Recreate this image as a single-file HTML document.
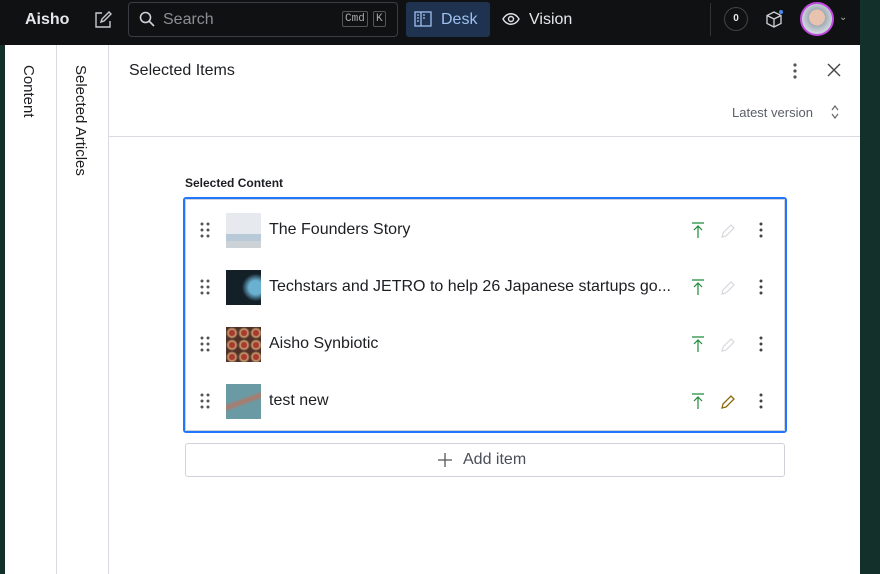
<!DOCTYPE html>
<html><head><meta charset="utf-8"><style>
*{box-sizing:border-box;margin:0;padding:0}
body{width:880px;height:574px;overflow:hidden;background:#13302a;font-family:"Liberation Sans",sans-serif;position:relative}
.a{position:absolute}
.top{left:0;top:0;width:860px;height:45px;background:#101112;color:#e6e7ea}
.pane{left:5px;top:45px;width:855px;height:529px;background:#fff}
.vl{position:absolute;top:0;bottom:0;width:1px;background:#d8dbe0}
.vt{position:absolute;writing-mode:vertical-rl;font-size:15px;color:#1c1e22;top:20px}
.row{position:absolute;left:0;width:600px;height:57px}
.thumb{position:absolute;left:41px;top:12px;width:35px;height:35px}
.rt{position:absolute;left:84px;top:20px;font-size:16px;color:#1c1e22;white-space:nowrap}
.grip{position:absolute;left:15px;top:21px}
</style></head><body>
<div class="a top">
 <div class="a" style="left:25px;top:11px;font-size:16px;font-weight:bold">Aisho</div>
 <svg class="a" style="left:93px;top:10px" width="20" height="20" viewBox="0 0 20 20" fill="none" stroke="#c8cad0" stroke-width="1.4"><path d="M9 3H3v14h14v-6"/><path d="M8 12l1-3 7-7 2 2-7 7z"/></svg>
 <div class="a" style="left:128px;top:2px;width:270px;height:35px;border:1px solid #3a3d44;border-radius:4px"></div>
 <svg class="a" style="left:138px;top:10px" width="18" height="18" viewBox="0 0 18 18" fill="none" stroke="#d0d2d8" stroke-width="1.6"><circle cx="7.5" cy="7.5" r="5"/><path d="M11 11l5 5"/></svg>
 <div class="a" style="left:163px;top:11px;font-size:16px;color:#8a8e96">Search</div>
 <div class="a" style="left:342px;top:11px;font-family:'Liberation Mono',monospace;font-size:11px;color:#aaa;border:1px solid #555;border-radius:2px;padding:1px 2px">Cmd</div>
 <div class="a" style="left:373px;top:11px;font-family:'Liberation Mono',monospace;font-size:11px;color:#aaa;border:1px solid #555;border-radius:2px;padding:1px 2px">K</div>
 <div class="a" style="left:406px;top:2px;width:84px;height:35px;background:#1f3350;border-radius:3px"></div>
 <svg class="a" style="left:414px;top:11px" width="18" height="16" viewBox="0 0 18 16" fill="none" stroke="#9ec0f0" stroke-width="1.3"><rect x="1" y="1" width="16" height="14"/><path d="M7 1v14M3 4h2M3 7h2M3 10h2M9 4h2M9 7h2"/></svg>
 <div class="a" style="left:441px;top:11px;font-size:16px;color:#9ec0f0">Desk</div>
 <svg class="a" style="left:502px;top:12px" width="18" height="14" viewBox="0 0 18 14" fill="none" stroke="#e0e2e6" stroke-width="1.4"><path d="M1 7c4-7 12-7 16 0-4 7-12 7-16 0z"/><circle cx="9" cy="7" r="2.5"/></svg>
 <div class="a" style="left:529px;top:11px;font-size:16px">Vision</div>
 <div class="a" style="left:710px;top:3px;width:1px;height:33px;background:#333"></div>
 <div class="a" style="left:724px;top:7px;width:24px;height:24px;border:1.5px solid #444;border-radius:50%;font-size:10px;font-weight:bold;text-align:center;line-height:21px">0</div>
 <svg class="a" style="left:764px;top:9px" width="20" height="20" viewBox="0 0 20 20" fill="none" stroke="#d0d2d8" stroke-width="1.3"><path d="M10 3l7 3.5v8L10 18l-7-3.5v-8z"/><path d="M3 6.5L10 10l7-3.5M10 10v8"/><circle cx="17" cy="3" r="2" fill="#4a8cf0" stroke="none"/></svg>
 <div class="a" style="left:800px;top:2px;width:34px;height:34px;border-radius:50%;border:2px solid #c248e0;background:radial-gradient(circle at 50% 45%,#e8c4b0 0 35%,#a0aab4 36%,#cfd8de 70%)"></div>
 <div class="a" style="left:839px;top:12px;font-size:10px;color:#aaa">⌄</div>
</div>
<div class="a pane">
 <div class="vl" style="left:51px"></div>
 <div class="vl" style="left:103px"></div>
 <div class="vt" style="left:15px">Content</div>
 <div class="vt" style="left:67px">Selected Articles</div>
 <div class="a" style="left:124px;top:17px;font-size:16px;color:#1c1e22">Selected Items</div>
 <svg class="a" style="left:787px;top:17px" width="6" height="18"><circle cx="3" cy="3" r="1.6" fill="#555"/><circle cx="3" cy="9" r="1.6" fill="#555"/><circle cx="3" cy="15" r="1.6" fill="#555"/></svg>
 <svg class="a" style="left:822px;top:18px" width="14" height="14" stroke="#444" stroke-width="1.4"><path d="M1 1l12 12M13 1L1 13"/></svg>
 <div class="a" style="left:727px;top:60px;font-size:13px;color:#5a5e68">Latest version</div>
 <svg class="a" style="left:825px;top:59px" width="10" height="16" fill="none" stroke="#666" stroke-width="1.2"><path d="M2 6l3-4 3 4M2 10l3 4 3-4"/></svg>
 <div class="a" style="left:104px;top:91px;width:751px;height:1px;background:#d8dbe0"></div>
 <div class="a" style="left:180px;top:131px;font-size:12px;font-weight:bold;color:#1c1e22">Selected Content</div>
</div>
<div class="a" style="left:183px;top:197px;width:604px;height:236px;border:2px solid #2276fc;border-radius:3px">
 <div class="a" style="inset:0;border:1px solid #cfd3d9"></div>
</div>
<div class="a" style="left:185px;top:199px;width:600px;height:232px">
 <div class="row" style="top:2px"><svg class="grip" width="10" height="16"><g fill="#555"><circle cx="2" cy="2" r="1.5"/><circle cx="8" cy="2" r="1.5"/><circle cx="2" cy="8" r="1.5"/><circle cx="8" cy="8" r="1.5"/><circle cx="2" cy="14" r="1.5"/><circle cx="8" cy="14" r="1.5"/></g></svg>
 <div class="thumb" style="background:linear-gradient(#e6eaee 0 60%,#b8cad8 60% 80%,#ccd2d6 80%)"></div><div class="rt">The Founders Story</div></div>
 <div class="row" style="top:59px"><svg class="grip" width="10" height="16"><g fill="#555"><circle cx="2" cy="2" r="1.5"/><circle cx="8" cy="2" r="1.5"/><circle cx="2" cy="8" r="1.5"/><circle cx="8" cy="8" r="1.5"/><circle cx="2" cy="14" r="1.5"/><circle cx="8" cy="14" r="1.5"/></g></svg>
 <div class="thumb" style="background:radial-gradient(circle at 85% 50%,#6ab0d0 0 20%,#142028 40%)"></div><div class="rt">Techstars and JETRO to help 26 Japanese startups go...</div></div>
 <div class="row" style="top:116px"><svg class="grip" width="10" height="16"><g fill="#555"><circle cx="2" cy="2" r="1.5"/><circle cx="8" cy="2" r="1.5"/><circle cx="2" cy="8" r="1.5"/><circle cx="8" cy="8" r="1.5"/><circle cx="2" cy="14" r="1.5"/><circle cx="8" cy="14" r="1.5"/></g></svg>
 <div class="thumb" style="background:radial-gradient(circle,#a83a30 0 30%,#c8a070 45%,#503028 70%);background-size:12px 12px"></div><div class="rt">Aisho Synbiotic</div></div>
 <div class="row" style="top:173px"><svg class="grip" width="10" height="16"><g fill="#555"><circle cx="2" cy="2" r="1.5"/><circle cx="8" cy="2" r="1.5"/><circle cx="2" cy="8" r="1.5"/><circle cx="8" cy="8" r="1.5"/><circle cx="2" cy="14" r="1.5"/><circle cx="8" cy="14" r="1.5"/></g></svg>
 <div class="thumb" style="background:linear-gradient(160deg,#6a9aa4 0 40%,#b07868 50%,#6a9aa4 60%)"></div><div class="rt">test new</div></div>
</div>
<svg class="a" style="left:691px;top:221px" width="460" height="200" fill="none">
 <g stroke="#1f8a3a" stroke-width="1.2"><path d="M1 2h12M7 5v12M3 9l4-4 4 4"/><path d="M1 59h12M7 62v12M3 66l4-4 4 4"/><path d="M1 116h12M7 119v12M3 123l4-4 4 4"/><path d="M1 173h12M7 176v12M3 180l4-4 4 4"/></g>
 <g stroke="#d6d8dc" stroke-width="1.2"><path d="M31 16l1-4 8-8 3 3-8 8z"/><path d="M31 73l1-4 8-8 3 3-8 8z"/><path d="M31 130l1-4 8-8 3 3-8 8z"/></g>
 <path d="M31 187l1-4 8-8 3 3-8 8z" stroke="#8a6a10" stroke-width="1.3"/>
 <g fill="#444"><circle cx="70" cy="3" r="1.5"/><circle cx="70" cy="9" r="1.5"/><circle cx="70" cy="15" r="1.5"/><circle cx="70" cy="60" r="1.5"/><circle cx="70" cy="66" r="1.5"/><circle cx="70" cy="72" r="1.5"/><circle cx="70" cy="117" r="1.5"/><circle cx="70" cy="123" r="1.5"/><circle cx="70" cy="129" r="1.5"/><circle cx="70" cy="174" r="1.5"/><circle cx="70" cy="180" r="1.5"/><circle cx="70" cy="186" r="1.5"/></g>
</svg>
<div class="a" style="left:185px;top:443px;width:600px;height:34px;border:1px solid #cfd3d9;border-radius:3px"></div>
<svg class="a" style="left:437px;top:452px" width="16" height="16" stroke="#555" stroke-width="1.3"><path d="M8 1v14M1 8h14"/></svg>
<div class="a" style="left:463px;top:451px;font-size:16px;color:#4a4e58">Add item</div>
</body></html>
